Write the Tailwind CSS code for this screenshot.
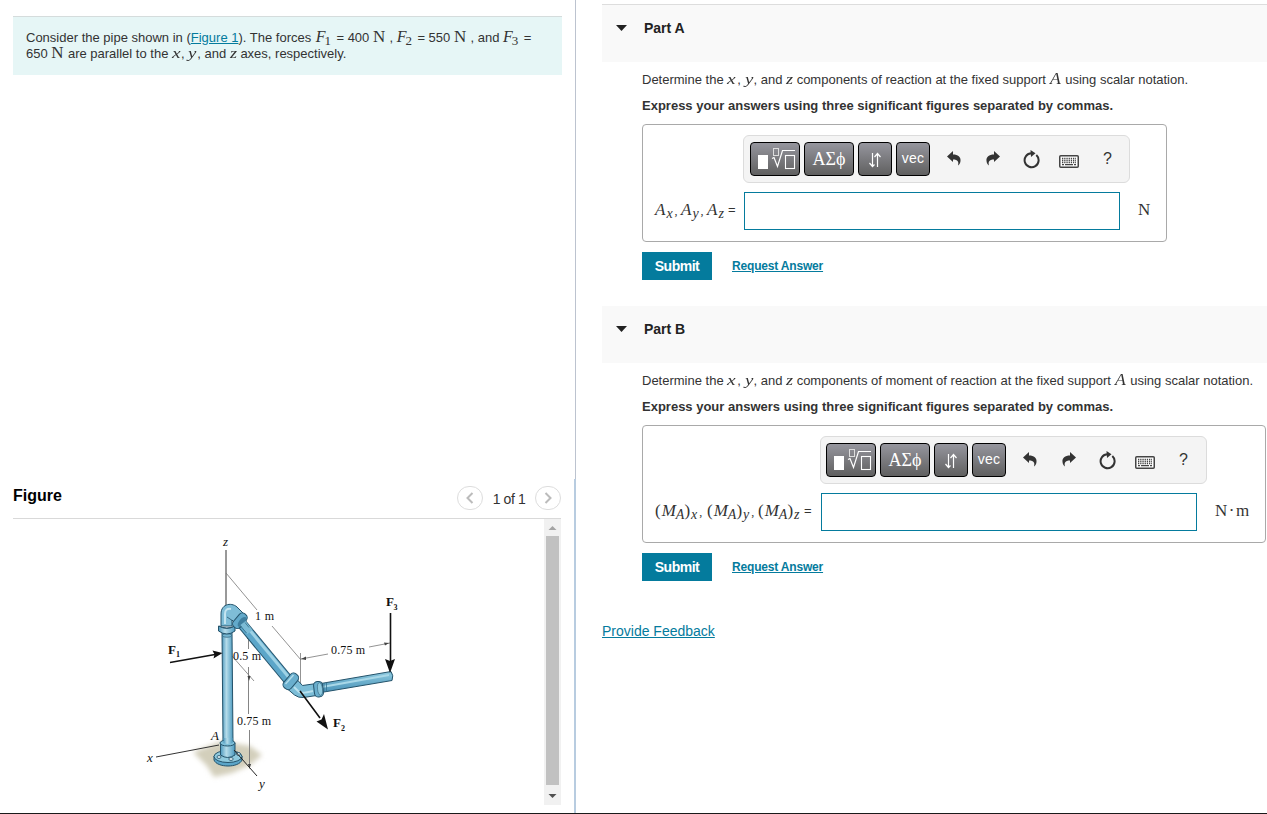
<!DOCTYPE html>
<html lang="en">
  <head>
    <meta charset="UTF-8" />
    <meta name="viewport" content="width=device-width, initial-scale=1.0" />
    <title>Pipe Reactions</title>
    <script src="https://cdn.jsdelivr.net/npm/@tailwindcss/browser@4"></script>
  </head>
  <body class="h-[814px] overflow-hidden bg-white font-['Liberation_Sans',Arial,sans-serif] text-[13px] text-[#333]">
    <!-- Shared icons -->
    <svg class="hidden" xmlns="http://www.w3.org/2000/svg">
      <symbol id="icon-root" viewBox="0 0 48 32">
        <rect x="7" y="12" width="10" height="14" fill="#fff" />
        <rect x="22.500" y="5.500" width="5" height="7" fill="none" stroke="#ddd" />
        <path d="M21 15.500l2-1 3.500 9 5-16h12.500" fill="none" stroke="#fff" stroke-width="1.200" />
        <rect x="34.500" y="12.500" width="9" height="13" fill="none" stroke="#fff" stroke-width="1.100" />
      </symbol>
      <symbol id="icon-updown" viewBox="0 0 14 16">
        <path d="M4.500 1v13M1.500 11l3 3.500 2-2M9.500 15V2M6.500 5l3-3.500 3 3.500" fill="none" stroke="#fff" stroke-width="1.200" />
      </symbol>
      <symbol id="icon-undo" viewBox="0 0 14 15">
        <path d="M0 5.500 6 0v3.500c5 0 8 2.500 7.500 6.500-.2 2-1.200 3.500-2.500 4.500 1-3.500 0-6-5-6V11z" fill="#333" />
      </symbol>
      <symbol id="icon-reset" viewBox="0 0 18 20">
        <path d="M9.500 4.200A7 7 0 1 0 14.300 6" fill="none" stroke="#333" stroke-width="2" />
        <path d="M8.500 1l5 3.200-4.500 3.800z" fill="#333" />
      </symbol>
      <symbol id="icon-keyboard" viewBox="0 0 20 13">
        <rect x=".75" y=".75" width="18.500" height="11.500" rx="1" fill="#fff" stroke="#444" stroke-width="1.500" />
        <path d="M3 3.500h14M3 5.500h14M3 7.500h14" stroke="#444" stroke-width="1.300" stroke-dasharray="1.300 .9" />
        <path d="M3 9.700h2M6 9.700h8M15 9.700h2" stroke="#444" stroke-width="1.300" />
      </symbol>
    </svg>

    <div class="flex h-[813px]">
      <!-- Problem statement and figure -->
      <div class="flex w-[574px] shrink-0 flex-col pl-[13px]">
        <div class="mt-4 h-[59px] w-[549px] border-t border-[#d5dcdc] bg-[#e6f6f6] pt-3 pl-[13px] leading-4 whitespace-nowrap">
          <p class="h-4">Consider the pipe shown in (<a href="#" class="text-[#047b9d] underline">Figure 1</a>). The forces <span class="ml-px inline-block w-[17px] font-['Liberation_Serif',serif] text-base leading-4 italic">F<sub class="-ml-px text-[13px] not-italic">1</sub></span> = 400 <span class="inline-block w-[13px] font-['Liberation_Serif',serif] text-[17px] leading-4">N</span> , <span class="inline-block w-[17px] font-['Liberation_Serif',serif] text-base leading-4 italic">F<sub class="-ml-px text-[13px] not-italic">2</sub></span> = 550 <span class="inline-block w-[13px] font-['Liberation_Serif',serif] text-[17px] leading-4">N</span> , and <span class="inline-block w-[17px] font-['Liberation_Serif',serif] text-base leading-4 italic">F<sub class="-ml-px text-[13px] not-italic">3</sub></span> =</p>
          <p class="h-4">650 <span class="inline-block w-[13px] font-['Liberation_Serif',serif] text-[17px] leading-4">N</span> are parallel to the <i class="inline-block w-[9px] origin-left scale-x-130 font-['Liberation_Serif',serif] text-[15px] leading-4">x</i>, <i class="inline-block w-[9px] origin-left scale-x-125 font-['Liberation_Serif',serif] text-[15px] leading-4">y</i>, and <i class="inline-block w-[7px] origin-left scale-x-120 font-['Liberation_Serif',serif] text-[15px] leading-4">z</i> axes, respectively.</p>
        </div>

        <div class="mt-[403px] flex h-[41px] w-[548px] items-center border-b border-[#d9d9d9]">
          <h2 class="-mt-1 grow text-base leading-5 font-bold text-black">Figure</h2>
          <button class="flex h-6 w-[26px] items-center justify-center rounded-full border border-[#ddd]">
            <svg class="h-3 w-2" viewBox="0 0 8 12" fill="none" stroke="#bbb" stroke-width="2"><path d="M6.500 1L1.500 6l5 5" /></svg>
          </button>
          <span class="w-[52px] pt-0.5 text-center text-sm tracking-[-0.4px]">1 of 1</span>
          <button class="flex h-6 w-[26px] items-center justify-center rounded-full border border-[#ddd]">
            <svg class="h-3 w-2" viewBox="0 0 8 12" fill="none" stroke="#bbb" stroke-width="2"><path d="M1.500 1l5 5-5 5" /></svg>
          </button>
        </div>

        <div class="flex h-[286px] w-[548px]">
          <svg class="h-[286px] w-[531px]" viewBox="13 519 531 286" font-family="Liberation Serif, serif" font-size="12" fill="#111">
            <defs>
              <linearGradient id="pipeV" x1="0" x2="1" y1="0" y2="0">
                <stop offset="0" stop-color="#4d98bd" /><stop offset=".4" stop-color="#b5dcea" /><stop offset="1" stop-color="#4d9bc0" />
              </linearGradient>
              <linearGradient id="pipeH" x1="0" x2="0" y1="0" y2="1">
                <stop offset="0" stop-color="#8fcbe0" /><stop offset="1" stop-color="#4791b7" />
              </linearGradient>
              <filter id="soft" x="-20%" y="-20%" width="140%" height="140%"><feGaussianBlur stdDeviation="2.500" /></filter>
            </defs>

            <!-- ground -->
            <path d="M193 752L222 741 250 746 262 755 250 765 232 773 214 777 207 766z" fill="#d3cfbb" filter="url(#soft)" />

            <!-- axes and dimension lines -->
            <path d="M226 550v58M156 757l63-12" stroke="#333" fill="none" />
            <path d="M226 573l31 37M272 626l29 34M300.500 653v34M301 659l27-5M369 647l21-4M232 656l22 25" stroke="#777" stroke-width=".8" fill="none" />
            <path d="M248.500 634v15M248.500 667v47M249.500 730v38" stroke="#777" stroke-width=".9" fill="none" />
            <path d="M247 639l2-6 2 6zM247.500 676l1.500 5 1.500-5zM301 659l5-2.500v3.500zM389 643l-5-.5 1 3zM248 764l1.500 5 1.500-5z" fill="#444" />

            <!-- vertical pipe -->
            <path d="M222 632h10l1 111h-10z" fill="url(#pipeV)" stroke="#24536b" />
            <ellipse cx="227" cy="635.500" rx="4.500" ry="1.800" fill="#78b8d3" stroke="#24536b" stroke-width=".6" />

            <!-- sloping pipe -->
            <path d="M242 624L290 682" stroke="#24536b" stroke-width="10.500" />
            <path d="M242 624L290 682" stroke="#5ca6c9" stroke-width="8.500" />
            <path d="M243 622L291 680" stroke="#9ed2e5" stroke-width="3" />

            <!-- top elbow -->
            <path d="M221 626v-12c0-11 12-12 17-6l6 6-8 10-4-4v6z" fill="#7fbdd7" stroke="#24536b" />
            <path d="M225 624v-10q0-6 6-5" stroke="#c5e5f0" stroke-width="2" fill="none" />
            <path d="M227 617l6 4" stroke="#24536b" stroke-width=".8" />
            <path d="M218.500 626v5q8.500 6 16.500 0v-5q-8 4-16.500 0" fill="url(#pipeV)" stroke="#24536b" />
            <path d="M219 626q8 5 15.500 0" fill="none" stroke="#24536b" stroke-width=".8" />
            <g transform="rotate(-50 241 621)">
              <rect x="232" y="615.500" width="17" height="9" rx="4" fill="#62a9ca" stroke="#24536b" />
              <ellipse cx="241" cy="622.500" rx="6" ry="3" fill="#3f7f9f" />
            </g>
            <path d="M243 623l7 9" stroke="#7cbcd6" stroke-width="6.500" />
            <path d="M240.500 626l6 7M245 622.500l4 5" stroke="#356d88" stroke-width=".8" />

            <!-- outer pipe -->
            <path d="M318 684L391 671.500q3 4 1 9L318 693z" fill="url(#pipeH)" stroke="#24536b" />
            <path d="M322 687L389 675" stroke="#a9d8e8" stroke-width="2" />
            <path d="M324 683v9M326.500 682.500v9" stroke="#35718e" stroke-width=".8" />

            <!-- lower elbow -->
            <path d="M287.500 689l9-10 6 6.500 14-2v12l-13 2q-5 .5-9-2.500z" fill="#7cbdd7" stroke="#24536b" />
            <path d="M294 687l5 5q3 2 14-1" stroke="#b9e0ed" stroke-width="2" fill="none" />
            <rect x="282" y="676.500" width="18" height="9.500" rx="4" transform="rotate(-50 291 681.500)" fill="#69aecd" stroke="#24536b" />
            <path d="M285.500 684l8-9" stroke="#b2dcea" stroke-width="1.500" />
            <rect x="314" y="681.500" width="9" height="15.500" rx="4" transform="rotate(-7 318 689)" fill="#69aecd" stroke="#24536b" />
            <ellipse cx="320" cy="689" rx="2.500" ry="6.500" transform="rotate(-7 320 689)" fill="#8ecadf" stroke="#24536b" stroke-width=".5" />

            <!-- base -->
            <path d="M214 756v4c3 8 25 8 28 0v-4z" fill="#5ba5c8" stroke="#24536b" />
            <ellipse cx="228" cy="756.500" rx="14" ry="6" fill="#8fcade" stroke="#24536b" />
            <path d="M220.500 743v12q7 5 14.500 0v-12z" fill="url(#pipeV)" stroke="#24536b" />
            <ellipse cx="227.500" cy="743" rx="7.500" ry="3" fill="#7fbfd8" stroke="#24536b" />
            <path d="M223.500 738h9v5q-4.500 2-9 0z" fill="url(#pipeV)" />
            <g fill="#d7e7ec" stroke="#24536b" stroke-width=".8">
              <ellipse cx="219" cy="757" rx="2" ry="1.500" />
              <ellipse cx="231" cy="759" rx="2.200" ry="1.500" />
              <ellipse cx="238.500" cy="754" rx="2" ry="1.500" />
            </g>
            <path d="M234 750l23 26" stroke="#222" />

            <!-- forces -->
            <path d="M170 662.500l45-8M390.500 613v49M300 691l20 27" stroke="#111" stroke-width="1.600" />
            <path d="M222.500 653l-10-2.500 2 4-1 4zM390 673l-5-14 5 2 5-2zM328 729.500l-11.500-8 5-2 2.500-5.500z" />

            <!-- labels -->
            <text x="223" y="546" font-size="13" font-style="italic">z</text>
            <text x="147" y="762" font-size="13" font-style="italic">x</text>
            <text x="259" y="788" font-size="13" font-style="italic">y</text>
            <text x="211" y="740" font-size="13" font-style="italic">A</text>
            <text x="255" y="620" textLength="19">1 m</text>
            <text x="233" y="660" textLength="28">0.5 m</text>
            <text x="237" y="725" textLength="34">0.75 m</text>
            <text x="331" y="654" textLength="34">0.75 m</text>
            <g font-weight="bold">
              <text x="168" y="654" font-size="13">F</text><text x="176" y="657" font-size="8">1</text>
              <text x="333" y="727" font-size="13">F</text><text x="341" y="731" font-size="8">2</text>
              <text x="386" y="606" font-size="13">F</text><text x="393.500" y="610" font-size="8">3</text>
            </g>
          </svg>
          <!-- scrollbar -->
          <div class="flex w-[17px] flex-col items-center justify-between bg-[#f1f1f1]">
            <svg class="h-[17px] w-[17px]" viewBox="0 0 17 17"><path d="M4.500 11h8l-4-4z" fill="#a3a3a3" /></svg>
            <div class="h-[249px] w-[13px] bg-[#c1c1c1]"></div>
            <svg class="h-5 w-[17px]" viewBox="0 0 17 20"><path d="M4.500 9h8l-4 4z" fill="#505050" /></svg>
          </div>
        </div>
      </div>

      <!-- Divider -->
      <div class="flex w-7 shrink-0 flex-col">
        <div class="ml-px h-[479px] w-px bg-[#bcc3cf]"></div>
        <div class="w-0.5 grow bg-[#b8cce0]"></div>
      </div>

      <!-- Parts -->
      <div class="w-[665px] shrink-0 pt-1">
        <section class="h-[302px]">
          <div class="flex h-[58px] items-start border-t border-[#ddd] bg-[#f9f9f9] pt-[15px] pl-3.5">
            <svg class="mt-[5px] h-1.5 w-[11px]" viewBox="0 0 11 6"><path d="M0 0h11L5.500 6z" fill="#222" /></svg>
            <h3 class="ml-[17px] text-sm leading-4 font-bold text-[#222]">Part A</h3>
          </div>
          <div class="pl-10 whitespace-nowrap">
            <p class="mt-[9px] h-4 leading-4">Determine the <i class="inline-block w-2.5 origin-left scale-x-130 font-['Liberation_Serif',serif] text-[15px] leading-4">x</i>, <i class="inline-block w-[9px] origin-left scale-x-125 font-['Liberation_Serif',serif] text-[15px] leading-4">y</i>, and <i class="inline-block w-[7px] origin-left scale-x-120 font-['Liberation_Serif',serif] text-[15px] leading-4">z</i> components of reaction at the fixed support <i class="inline-block w-3 origin-left scale-x-110 font-['Liberation_Serif',serif] text-base leading-4">A</i> using scalar notation.</p>
            <p class="mt-[11px] h-4 leading-4 font-bold">Express your answers using three significant figures separated by commas.</p>
            <div class="mt-2.5 h-[118px] w-[525px] rounded border border-[#a9a9a9] pt-2.5">
              <div class="ml-[100px] flex h-12 w-[387px] items-start rounded-md border border-[#dcdcdc] bg-[#f4f4f4] pt-1.5 pl-1.5 text-white">
                <button class="h-[34px] w-[50px] rounded border border-black bg-linear-to-b from-[#96969e] to-[#606060]"><svg class="h-8 w-12"><use href="#icon-root" /></svg></button>
                <button class="ml-1 h-[34px] w-[50px] rounded border border-black bg-linear-to-b from-[#96969e] to-[#606060] font-['Liberation_Serif',serif] text-lg leading-[30px]">ΑΣϕ</button>
                <button class="ml-1 flex h-[34px] w-[34px] items-center justify-center rounded border border-black bg-linear-to-b from-[#96969e] to-[#606060]"><svg class="mt-0.5 h-4 w-3.5"><use href="#icon-updown" /></svg></button>
                <button class="ml-1 h-[34px] w-[34px] rounded border border-black bg-linear-to-b from-[#96969e] to-[#606060] pb-0.5 text-sm leading-[30px] tracking-[0.3px]">vec</button>
                <svg class="mt-[9px] ml-[17px] h-[15px] w-3.5"><use href="#icon-undo" /></svg>
                <svg class="mt-[9px] ml-[25px] h-[15px] w-3.5 -scale-x-100"><use href="#icon-undo" /></svg>
                <svg class="mt-[7px] ml-[22px] h-5 w-[18px]"><use href="#icon-reset" /></svg>
                <svg class="mt-[13px] ml-[19px] h-[13px] w-5"><use href="#icon-keyboard" /></svg>
                <span class="mt-[7px] ml-6 text-base leading-5 text-[#333]">?</span>
              </div>
              <div class="mt-[9px] flex h-[38px] items-center">
                <div class="flex w-[101px] pb-0.5 pl-3 font-['Liberation_Serif',serif] text-[17px] leading-5">
                  <span class="w-[26px]"><i>A<sub class="ml-px text-sm">x</sub></i><span class="ml-0.5 text-xs">,</span></span>
                  <span class="w-[26px]"><i>A<sub class="ml-px text-sm">y</sub></i><span class="ml-0.5 text-xs">,</span></span>
                  <span class="w-[21px]"><i>A<sub class="ml-px text-sm">z</sub></i></span>
                  <span class="font-['Liberation_Sans',sans-serif] text-[13px] leading-5">=</span>
                </div>
                <input class="h-[38px] w-[376px] border border-[#047b9d] bg-white outline-none" />
                <span class="ml-[18px] pb-0.5 font-['Liberation_Serif',serif] text-[17px]">N</span>
              </div>
            </div>
            <div class="mt-2.5 flex h-7 items-center">
              <button class="h-7 w-[70px] bg-[#047b9d] text-sm font-bold tracking-[-0.5px] text-white">Submit</button>
              <a href="#" class="ml-5 text-xs font-bold tracking-[-0.18px] text-[#047b9d] underline">Request Answer</a>
            </div>
          </div>
        </section>

        <section class="h-[316px]">
          <div class="flex h-[57px] items-start bg-[#f9f9f9] pt-[15px] pl-3.5">
            <svg class="mt-[5px] h-1.5 w-[11px]" viewBox="0 0 11 6"><path d="M0 0h11L5.500 6z" fill="#222" /></svg>
            <h3 class="ml-[17px] text-sm leading-4 font-bold text-[#222]">Part B</h3>
          </div>
          <div class="pl-10 whitespace-nowrap">
            <p class="mt-[9px] h-4 leading-4">Determine the <i class="inline-block w-2.5 origin-left scale-x-130 font-['Liberation_Serif',serif] text-[15px] leading-4">x</i>, <i class="inline-block w-[9px] origin-left scale-x-125 font-['Liberation_Serif',serif] text-[15px] leading-4">y</i>, and <i class="inline-block w-[7px] origin-left scale-x-120 font-['Liberation_Serif',serif] text-[15px] leading-4">z</i> components of moment of reaction at the fixed support <i class="inline-block w-3 origin-left scale-x-110 font-['Liberation_Serif',serif] text-base leading-4">A</i> using scalar notation.</p>
            <p class="mt-[11px] h-4 leading-4 font-bold">Express your answers using three significant figures separated by commas.</p>
            <div class="mt-2.5 h-[118px] w-[624px] rounded border border-[#a9a9a9] pt-2.5">
              <div class="ml-[177px] flex h-12 w-[387px] items-start rounded-md border border-[#dcdcdc] bg-[#f4f4f4] pt-1.5 pl-[5px] text-white">
                <button class="h-[34px] w-[50px] rounded border border-black bg-linear-to-b from-[#96969e] to-[#606060]"><svg class="h-8 w-12"><use href="#icon-root" /></svg></button>
                <button class="ml-1 h-[34px] w-[50px] rounded border border-black bg-linear-to-b from-[#96969e] to-[#606060] font-['Liberation_Serif',serif] text-lg leading-[30px]">ΑΣϕ</button>
                <button class="ml-1 flex h-[34px] w-[34px] items-center justify-center rounded border border-black bg-linear-to-b from-[#96969e] to-[#606060]"><svg class="mt-0.5 h-4 w-3.5"><use href="#icon-updown" /></svg></button>
                <button class="ml-1 h-[34px] w-[34px] rounded border border-black bg-linear-to-b from-[#96969e] to-[#606060] pb-0.5 text-sm leading-[30px] tracking-[0.3px]">vec</button>
                <svg class="mt-[9px] ml-[17px] h-[15px] w-3.5"><use href="#icon-undo" /></svg>
                <svg class="mt-[9px] ml-[25px] h-[15px] w-3.5 -scale-x-100"><use href="#icon-undo" /></svg>
                <svg class="mt-[7px] ml-[22px] h-5 w-[18px]"><use href="#icon-reset" /></svg>
                <svg class="mt-[13px] ml-[19px] h-[13px] w-5"><use href="#icon-keyboard" /></svg>
                <span class="mt-[7px] ml-6 text-base leading-5 text-[#333]">?</span>
              </div>
              <div class="mt-[9px] flex h-[38px] items-center">
                <div class="flex w-[178px] pb-0.5 pl-3 font-['Liberation_Serif',serif] text-[17px] leading-5">
                  <span class="w-[52px]">(<i class="ml-px">M<sub class="text-sm">A</sub></i>)<sub class="ml-px text-sm italic">x</sub><span class="ml-0.5 text-xs">,</span></span>
                  <span class="w-[51px]">(<i class="ml-px">M<sub class="text-sm">A</sub></i>)<sub class="ml-px text-sm italic">y</sub><span class="ml-0.5 text-xs">,</span></span>
                  <span class="w-[46px]">(<i class="ml-px">M<sub class="text-sm">A</sub></i>)<sub class="ml-px text-sm italic">z</sub></span>
                  <span class="font-['Liberation_Sans',sans-serif] text-[13px] leading-5">=</span>
                </div>
                <input class="h-[38px] w-[376px] border border-[#047b9d] bg-white outline-none" />
                <span class="ml-[18px] pb-0.5 font-['Liberation_Serif',serif] text-[17px] tracking-[1.5px]">N·m</span>
              </div>
            </div>
            <div class="mt-2.5 flex h-7 items-center">
              <button class="h-7 w-[70px] bg-[#047b9d] text-sm font-bold tracking-[-0.5px] text-white">Submit</button>
              <a href="#" class="ml-5 text-xs font-bold tracking-[-0.18px] text-[#047b9d] underline">Request Answer</a>
            </div>
          </div>
        </section>

        <a href="#" class="inline-block text-sm leading-4 text-[#047b9d] underline">Provide Feedback</a>
      </div>
    </div>
    <div class="h-px bg-[#1a1a1a]"></div>
  </body>
</html>
